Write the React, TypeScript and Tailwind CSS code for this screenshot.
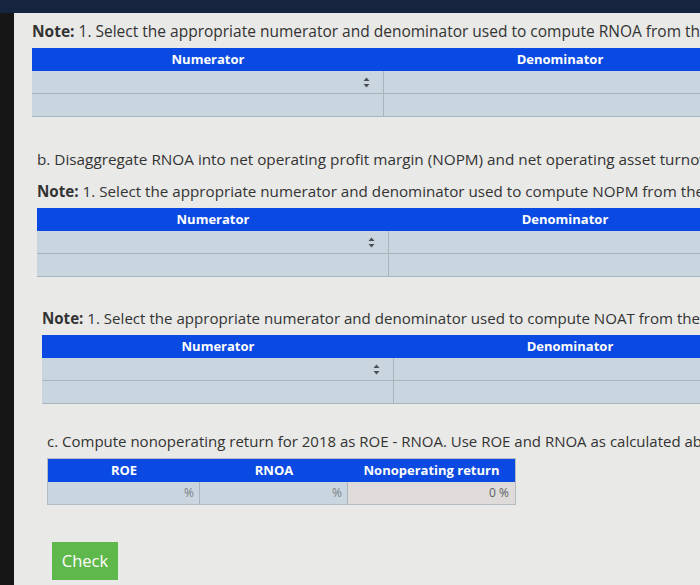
const font = "font-['Open_Sans','Liberation_Sans',sans-serif]"

function SelectArrows() {
  return (
    <svg width="7" height="11" viewBox="0 0 7 11" className="text-[#4a4f55]">
      <path d="M3.5 0.5 L6.5 4 L0.5 4 Z" fill="currentColor" />
      <path d="M3.5 10.5 L6.5 7 L0.5 7 Z" fill="currentColor" />
    </svg>
  )
}

function Note({ what, size }: { what: string; size: string }) {
  return (
    <p className={`${size} leading-[22px] text-[#333] whitespace-nowrap`}>
      <span className="font-bold">Note:</span> 1. Select the appropriate numerator and denominator used to compute {what} from the income statement and balance sheet.
    </p>
  )
}

function RatioTable() {
  return (
    <div className="w-[720px] border-b border-[#aab6be]">
      <div className="flex h-[23px] bg-[#0a49e2] text-white text-[13px] font-bold items-center">
        <div className="w-[352px] text-center">Numerator</div>
        <div className="w-[352px] text-center">Denominator</div>
      </div>
      <div className="flex h-[23px] bg-[#c9d6df] border-b border-[#a9b5bd]">
        <div className="w-[352px] border-r border-[#a9b5bd] flex items-center justify-end pr-[13px]">
          <SelectArrows />
        </div>
        <div className="w-[352px]" />
      </div>
      <div className="flex h-[22px] bg-[#c9d6df]">
        <div className="w-[352px] border-r border-[#a9b5bd]" />
        <div className="w-[352px]" />
      </div>
    </div>
  )
}

export default function App() {
  return (
    <div className={`w-[700px] h-[585px] overflow-hidden bg-[#e9e9e8] flex flex-col ${font}`}>
      <div className="h-[13px] shrink-0 bg-[#172440]" />
      <div className="flex flex-1">
        <div className="w-[14px] shrink-0 bg-[#161616]" />
        <div className="flex-1 flex flex-col overflow-hidden">
          <div className="ml-[18px] mt-[7px]">
            <Note what="RNOA" size="text-[15.5px]" />
            <div className="mt-[6px]">
              <RatioTable />
            </div>
          </div>

          <div className="ml-[23px] mt-[31px]">
            <p className="text-[15.3px] leading-[22px] text-[#333] whitespace-nowrap">
              b. Disaggregate RNOA into net operating profit margin (NOPM) and net operating asset turnover (NOAT).
            </p>
            <div className="mt-[10px]">
              <Note what="NOPM" size="text-[15.2px]" />
            </div>
            <div className="mt-[6px]">
              <RatioTable />
            </div>
          </div>

          <div className="ml-[28px] mt-[30px]">
            <Note what="NOAT" size="text-[15.1px]" />
            <div className="mt-[6px]">
              <RatioTable />
            </div>
          </div>

          <div className="ml-[33px] mt-[26px]">
            <p className="text-[15px] leading-[22px] text-[#333] whitespace-nowrap">
              c. Compute nonoperating return for 2018 as ROE - RNOA. Use ROE and RNOA as calculated above.
            </p>
            <div className="mt-[6px] w-[469px] border border-[#b5bcc1]">
              <div className="flex h-[23px] bg-[#0a49e2] text-white text-[13px] font-bold items-center">
                <div className="w-[152px] text-center">ROE</div>
                <div className="w-[148px] text-center">RNOA</div>
                <div className="flex-1 text-center">Nonoperating return</div>
              </div>
              <div className="flex h-[22px] text-[12px] items-stretch">
                <div className="w-[152px] bg-[#c9d6df] border-r border-[#aab4ba] flex items-center justify-end pr-[5px] text-[#7a7f84]">%</div>
                <div className="w-[148px] bg-[#c9d6df] border-r border-[#aab4ba] flex items-center justify-end pr-[5px] text-[#7a7f84]">%</div>
                <div className="flex-1 bg-[#dedbda] flex items-center justify-end pr-[6px] text-[#5d6166]">0 %</div>
              </div>
            </div>
          </div>

          <div className="ml-[38px] mt-[37px]">
            <button className="w-[66px] h-[38px] bg-[#5fb84b] text-white text-[16.5px] flex items-center justify-center">
              Check
            </button>
          </div>
        </div>
      </div>
    </div>
  )
}
